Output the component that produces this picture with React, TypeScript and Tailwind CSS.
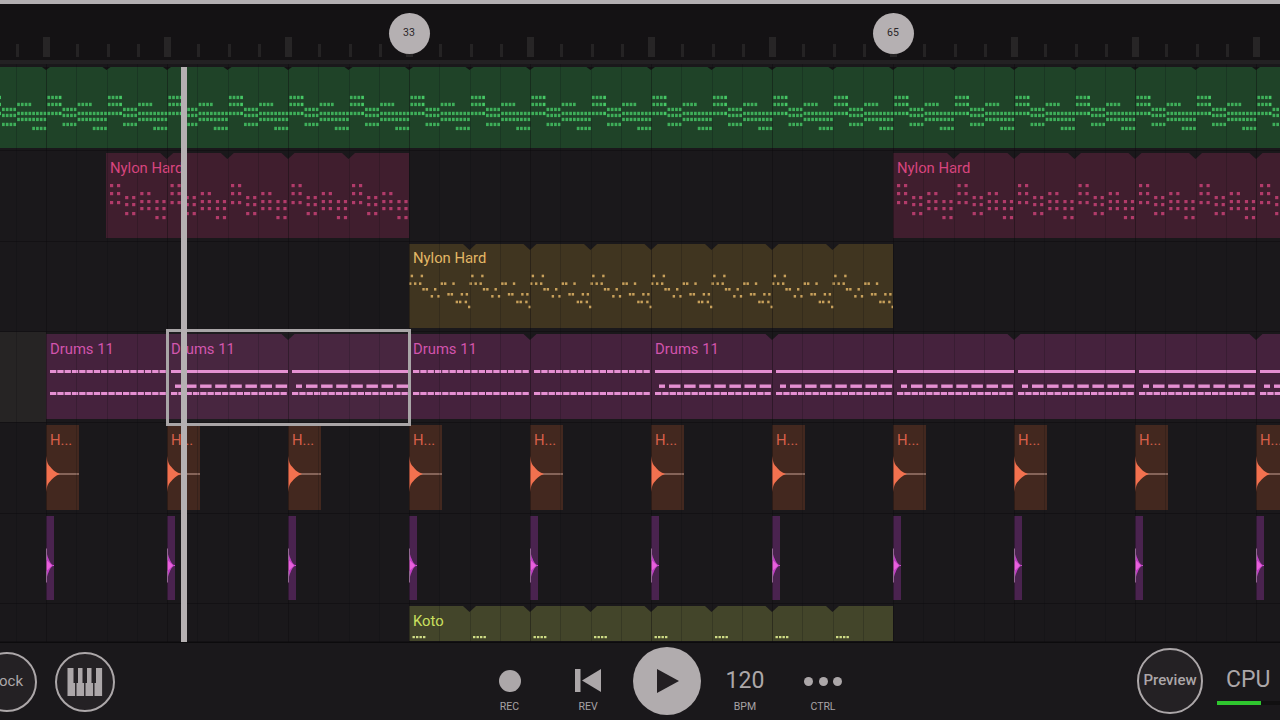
import React from "react";

const P = 60.5;
const BAR = 121;
const range = (n: number) => Array.from({ length: n }, (_, i) => i);
const gridXs = range(43).map((i) => 15.75 + 30.25 * i);

type R = { x: number; y: number; w: number; h: number; o?: number };

function Tri({ xs, w, h, fill }: { xs: number[]; w: number; h: number; fill: string }) {
  return (
    <>
      {xs.map((x) => (
        <polygon key={x} points={`${x - w / 2},0 ${x + w / 2},0 ${x},${h}`} fill={fill} />
      ))}
    </>
  );
}

function Rects({ items, fill }: { items: R[]; fill: string }) {
  return (
    <>
      {items.map((r, i) => (
        <rect key={i} x={r.x} y={r.y} width={r.w} height={r.h} fill={fill} opacity={r.o ?? 1} />
      ))}
    </>
  );
}

function Clip({
  left,
  width,
  className,
  label,
  labelClass,
  labels,
  children,
}: {
  left: number;
  width: number;
  className: string;
  label?: string;
  labelClass?: string;
  labels?: number[];
  children?: React.ReactNode;
}) {
  return (
    <div className={`absolute top-[2px] bottom-[3px] overflow-hidden ${className}`} style={{ left, width }}>
      <svg className="absolute inset-0 h-full w-full">{children}</svg>
      {label &&
        (labels ?? [0]).map((l) => (
          <span
            key={l}
            className={`absolute top-[5.5px] text-[14.8px] leading-[18px] whitespace-nowrap ${labelClass}`}
            style={{ left: l + 4 }}
          >
            {label}
          </span>
        ))}
    </div>
  );
}

/* green melody */
const greenRows = [
  [28.8, 35.8, 44.8],
  [40.8, 46.8, 55.8],
  [35.8, 44.8, 50.8],
  [44.8, 50.8, 59.8],
];
const greenNotes: R[] = [];
range(23).forEach((k) => {
  greenRows.forEach((rows, g) => {
    rows.forEach((y) => {
      range(4).forEach((n) => {
        greenNotes.push({
          x: -14.5 + k * P + g * 15.125 + 1.4 + n * 3.78,
          y,
          w: 2.7,
          h: 3.3,
          o: n === 3 && g === 0 ? 1 : 0.82,
        });
      });
    });
  });
});

/* pink melody, relative to a clip start */
const pinkRows = [
  [31, 39, 48],
  [43, 50, 59],
  [39, 47, 54],
  [47, 54, 63],
];
const pinkNotes = (count: number): R[] => {
  const out: R[] = [];
  range(count).forEach((k) =>
    pinkRows.forEach((rows, g) =>
      rows.forEach((y) =>
        [0, 7].forEach((dx) => out.push({ x: k * P + g * 15.125 + 4 + dx, y, w: 3.2, h: 3.2, o: 0.75 }))
      )
    )
  );
  return out;
};

/* yellow melody */
const yellowBase: [number, number][] = [
  [35, 107], [65, 107], [30, 130], [45, 130], [60, 130], [70, 147], [80, 147], [105, 147],
  [95, 168], [115, 168], [125, 130], [135, 130], [160, 130], [145, 162], [155, 162], [185, 162],
  [200, 162], [170, 185], [180, 185], [197, 185], [207, 200],
];
const yellowNotes: R[] = [];
range(9).forEach((k) =>
  yellowBase.forEach(([x, y]) =>
    yellowNotes.push({ x: k * P + (x - 27) / 3 - 1, y: y / 3 - 4 - 1, w: 2.4, h: 2.6, o: 0.85 })
  )
);

/* drums */
const drumNotes = (seg: number, full: boolean): R[] => {
  const out: R[] = [];
  const tops = 36;
  const low = 58;
  const mid = 50.5;
  range(16).forEach((n) => {
    out.push({ x: seg + 4 + n * 7.3, y: low, w: 6.3, h: 3 });
    if (!full) out.push({ x: seg + 4 + n * 7.3, y: tops, w: 6.3, h: 3 });
  });
  if (full) {
    out.push({ x: seg + 4, y: tops, w: 117, h: 3 });
    out.push({ x: seg + 8, y: mid, w: 6, h: 3.4 });
    range(7).forEach((n) => out.push({ x: seg + 18 + n * 15.1, y: mid, w: 11.5, h: 3.4 }));
  }
  return out;
};
const drumsAll: R[] = [
  ...drumNotes(0, false),
  ...drumNotes(BAR, true),
  ...drumNotes(BAR * 2, true),
  ...drumNotes(BAR * 3, false),
  ...drumNotes(BAR * 4, false),
  ...range(6).flatMap((i) => drumNotes(BAR * (5 + i), true)),
];

const bars = range(11).map((i) => 46 + BAR * i);

function HitWave() {
  return (
    <g transform="translate(0,49)">
      <line x1="0" y1="0" x2="33" y2="0" stroke="#c9a094" strokeWidth="1" />
      <path d="M0,-18 C1,-12 2,-9 4,-7.5 C6,-5 9,-1.5 14,0 C9,1.5 6,5 4,7.5 C2,9 1,12 0,18 Z" fill="#f2714f" />
    </g>
  );
}

function PurpleWave() {
  return (
    <g transform="translate(0,49.5)">
      <line x1="0" y1="0" x2="8" y2="0" stroke="#d860d8" strokeWidth="1" />
      <path d="M0,-17 C1,-11 1.5,-9 2.5,-7 C3.5,-4 5,-1 8,0 C5,1 3.5,4 2.5,7 C1.5,9 1,11 0,17 Z" fill="#c040c4" />
      <line x1="0.5" y1="-17" x2="0.5" y2="17" stroke="#e9a4e9" strokeWidth="1" />
      <path d="M0,-6 L6,0 L0,6 Z" fill="#e860dc" />
    </g>
  );
}

function Row({ first, short, children }: { first?: boolean; short?: boolean; children?: React.ReactNode }) {
  return (
    <div
      className={`relative border-b border-[#131114] ${
        first ? "h-[87px]" : short ? "h-[37.5px]" : "h-[90.7px]"
      }`}
    >
      {children}
    </div>
  );
}

function Ruler() {
  return (
    <div className="relative h-[60px] shrink-0 bg-[#141214] border-b-4 border-[#232123]">
      {range(43).map((i) => {
        const tall = i % 4 === 1;
        const x = gridXs[i];
        return tall ? (
          <div key={i} className="absolute top-[33px] h-[20px] w-[7px] bg-[#272526]" style={{ left: x - 3 }} />
        ) : (
          <div key={i} className="absolute top-[40px] h-[13px] w-[3px] bg-[#252324]" style={{ left: x }} />
        );
      })}
      {[
        { n: 33, x: 409 },
        { n: 65, x: 893 },
      ].map((b) => (
        <div
          key={b.n}
          className="absolute top-[8.5px] flex h-[41px] w-[41px] items-center justify-center rounded-full bg-[#b5b0b2] text-[10.5px] text-[#2a2628]"
          style={{ left: b.x - 20.5 }}
        >
          {b.n}
        </div>
      ))}
    </div>
  );
}

function Timeline() {
  const green = range(22).map((i) => 46 + P * i - P);
  return (
    <div className="relative h-[578px] shrink-0 overflow-hidden bg-[#1a181b]">
      <Row first>
        <div className="absolute top-[2.7px] bottom-[2.2px] left-0 w-[1280px] overflow-hidden bg-[#1f4328]">
          <svg className="absolute inset-0 h-full w-full">
            <Rects items={greenNotes} fill="#46c765" />
            <Tri xs={green} w={8} h={3} fill="#141214" />
          </svg>
        </div>
      </Row>
      <Row>
        <Clip left={106} width={303} className="bg-[#401e2e]" label="Nylon Hard" labelClass="text-[#d8457f]">
          <Rects items={pinkNotes(5)} fill="#d8457f" />
          <Tri xs={[60.7, 121.3, 182, 242.5]} w={13} h={6} fill="#1a181b" />
        </Clip>
        <Clip left={893} width={387} className="bg-[#401e2e]" label="Nylon Hard" labelClass="text-[#d8457f]">
          <Rects items={pinkNotes(7)} fill="#d8457f" />
          <Tri xs={[60.5, 121, 181.5, 242, 302.5, 363]} w={13} h={6} fill="#1a181b" />
        </Clip>
      </Row>
      <Row>
        <Clip left={409} width={484} className="bg-[#403520]" label="Nylon Hard" labelClass="text-[#e4b866]">
          <Rects items={yellowNotes} fill="#e0b466" />
          <Tri xs={[60.5, 121, 181.5, 242, 302.5, 363, 423.5]} w={13} h={6} fill="#1a181b" />
        </Clip>
      </Row>
      <Row>
        <div className="absolute top-0 bottom-0 left-0 w-[46px] bg-[#262424]" />
        <Clip
          left={46}
          width={1234}
          className="bg-[#45223d]"
          label="Drums 11"
          labelClass="text-[#d254ad]"
          labels={[0, BAR, BAR * 3, BAR * 5]}
        >
          <Rects items={drumsAll} fill="#e58fd2" />
          <Tri xs={[BAR * 2, BAR * 4, BAR * 6, BAR * 8, BAR * 10]} w={13} h={6} fill="#1a181b" />
        </Clip>
      </Row>
      <Row>
        {bars.map((x) => (
          <Clip key={x} left={x} width={33} className="bg-[#43281f]" label="H..." labelClass="text-[#d8604a]">
            <HitWave />
          </Clip>
        ))}
      </Row>
      <Row>
        {bars.map((x) => (
          <Clip key={x} left={x} width={8} className="bg-[#4a234f]">
            <PurpleWave />
          </Clip>
        ))}
      </Row>
      <Row short>
        <div className="absolute top-[2px] bottom-0 left-[409px] w-[484px] overflow-hidden bg-[#43452a]">
          <svg className="absolute inset-0 h-full w-full">
            <Tri xs={[60.5, 121, 181.5, 242, 302.5, 363, 423.5]} w={13} h={6} fill="#1a181b" />
            <Rects
              items={range(8).flatMap((k) =>
                range(4).map((n) => ({ x: 3.5 + k * P + n * 3.5, y: 30, w: 2.4, h: 2.2 }))
              )}
              fill="#cfdc86"
            />
          </svg>
          <span className="absolute left-1 top-[6px] text-[14.8px] leading-[18px] text-[#cbe05f]">Koto</span>
        </div>
      </Row>

      {/* bar lines over the clips */}
      {gridXs.map((x, i) => (
        <div
          key={i}
          className={`absolute top-0 bottom-0 w-px ${i % 4 === 1 ? "bg-[#0c0b0d]/40" : "bg-[#0c0b0d]/20"}`}
          style={{ left: x }}
        />
      ))}

      {/* selection */}
      <div className="absolute left-[166px] top-[264.5px] h-[97px] w-[244.5px] border-[3px] border-[#a9a5a7] bg-white/[0.02]" />
      {/* playhead */}
      <div className="absolute left-[181px] top-[3px] bottom-0 w-[6px] bg-[#b5b0b2]" />
    </div>
  );
}

function Ctl({ label, className, children }: { label: string; className: string; children: React.ReactNode }) {
  return (
    <div className={`flex w-[60px] shrink-0 flex-col items-center self-start pt-[26px] ${className}`}>
      <div className="flex h-[24px] items-center justify-center">{children}</div>
      <div className="mt-[9px] text-[10.5px] leading-[10px] text-[#a8a3a5]">{label}</div>
    </div>
  );
}

function Bottom() {
  return (
    <div className="flex h-[78px] shrink-0 items-center overflow-hidden border-t border-[#0c0b0d] bg-[#1a181b]">
      <div className="-ml-[23px] flex h-[60px] w-[60px] shrink-0 items-center justify-end rounded-full border-2 border-[#aca7a9] bg-[#242124] pr-[12px] pb-[1px] text-[15px] text-[#aca7a9]">
        ock
      </div>
      <div className="ml-[18px] flex h-[60px] w-[60px] shrink-0 items-center justify-center rounded-full border-2 border-[#aca7a9] bg-[#242124]">
        <svg width="36" height="28" viewBox="0 0 36 28">
          <g fill="#aca7a9">
            <rect x="0.5" y="0" width="7.6" height="28" />
            <rect x="9.5" y="0" width="7.6" height="28" />
            <rect x="18.5" y="0" width="7.6" height="28" />
            <rect x="27.5" y="0" width="7.6" height="28" />
          </g>
          <g fill="#242124">
            <rect x="6.5" y="0" width="4.5" height="15" />
            <rect x="15.5" y="0" width="4.5" height="15" />
            <rect x="24.5" y="0" width="4.5" height="15" />
          </g>
        </svg>
      </div>

      <Ctl label="REC" className="ml-[364.5px]">
        <div className="h-[22px] w-[22px] rounded-full bg-[#aca7a9]" />
      </Ctl>
      <Ctl label="REV" className="ml-[18.5px]">
        <svg width="26" height="24" viewBox="0 0 26 24">
          <rect x="0" y="0" width="5.5" height="23" fill="#aca7a9" />
          <polygon points="7,11.5 26,0 26,23" fill="#aca7a9" />
        </svg>
      </Ctl>
      <div className="ml-[14.5px] -mt-[2px] flex h-[68px] w-[68px] shrink-0 items-center justify-center rounded-full bg-[#b1acae]">
        <svg width="22" height="24" viewBox="0 0 22 24" className="ml-[3px]">
          <polygon points="0,0 22,12 0,24" fill="#231f22" />
        </svg>
      </div>
      <Ctl label="BPM" className="ml-[14.5px]">
        <span className="text-[23px] leading-[24px] text-[#aca7a9]">120</span>
      </Ctl>
      <Ctl label="CTRL" className="ml-[18px]">
        <div className="flex gap-[5.5px]">
          <div className="h-[9px] w-[9px] rounded-full bg-[#aca7a9]" />
          <div className="h-[9px] w-[9px] rounded-full bg-[#aca7a9]" />
          <div className="h-[9px] w-[9px] rounded-full bg-[#aca7a9]" />
        </div>
      </Ctl>

      <div className="ml-[284px] -mt-[2px] flex h-[66px] w-[66px] shrink-0 items-center justify-center rounded-full border-2 border-[#aca7a9] bg-[#242124] text-[15px] font-medium text-[#aca7a9]">
        Preview
      </div>
      <div className="ml-[14px] flex w-[63px] shrink-0 flex-col self-start pt-[24px]">
        <div className="pl-[9px] text-[23px] leading-[26px] text-[#aca7a9]">CPU</div>
        <div className="mt-[8px] h-[4px] w-full bg-[#111011]">
          <div className="h-full w-[44px] bg-[#2fc62f]" />
        </div>
      </div>
    </div>
  );
}

export default function App() {
  return (
    <div className="flex h-[720px] w-[1280px] flex-col overflow-hidden bg-[#1a181b] font-['Roboto',sans-serif]">
      <div className="h-[4px] shrink-0 bg-[#b3afb1]" />
      <Ruler />
      <Timeline />
      <Bottom />
    </div>
  );
}
